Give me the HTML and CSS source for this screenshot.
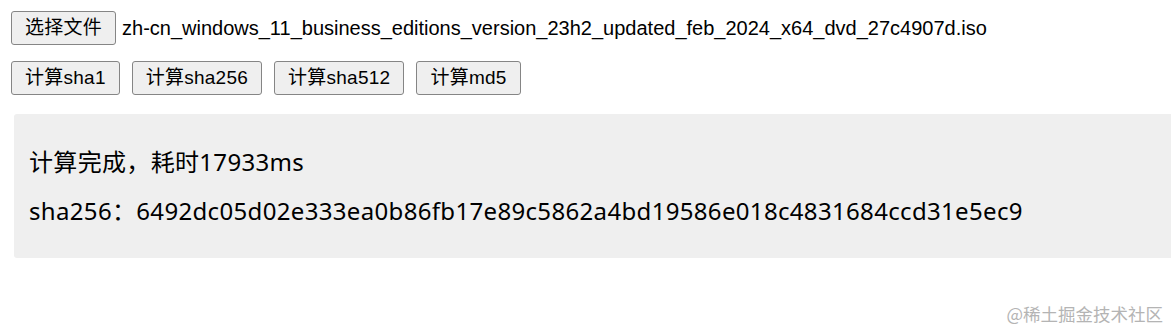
FILE: index.html
```html
<!DOCTYPE html>
<html lang="zh-CN">
<head>
    <meta charset="UTF-8">
    <title>文件哈希计算</title>
    <link rel="stylesheet" href="styles.css">
</head>
<body>
    <div class="file-row">
        <button class="btn">选择文件</button>
        <span class="file-name">zh-cn_windows_11_business_editions_version_23h2_updated_feb_2024_x64_dvd_27c4907d.iso</span>
    </div>

    <div class="actions">
        <button class="btn">计算sha1</button>
        <button class="btn">计算sha256</button>
        <button class="btn">计算sha512</button>
        <button class="btn">计算md5</button>
    </div>

    <div class="result">
        <p>计算完成，耗时17933ms</p>
        <p>sha256：6492dc05d02e333ea0b86fb17e89c5862a4bd19586e018c4831684ccd31e5ec9</p>
    </div>

    <div class="watermark">@稀土掘金技术社区</div>
</body>
</html>
```

FILE: styles.css
```css
body {
    margin: 0;
    padding: 11px 0 0 11px;
    font-family: "Liberation Sans", Arial, "Noto Sans CJK SC", sans-serif;
    color: #000;
    background: #fff;
    overflow: hidden;
}

.btn {
    font-family: "Liberation Sans", Arial, "Noto Sans CJK SC", sans-serif;
    font-size: 19px;
    line-height: 20px;
    padding: 6px 13px;
    letter-spacing: 0.25px;
    color: #000;
    background: #efefef;
    border: 1px solid #858585;
    border-radius: 3px;
}

.file-row {
    display: flex;
    align-items: center;
    gap: 6px;
}

.file-name {
    font-size: 20px;
}

.actions {
    display: flex;
    gap: 12px;
    margin-top: 16px;
}

.result {
    margin: 19px 0 0 3px;
    padding: 23px 15px;
    background: #efefef;
    border-radius: 3px 0 0 3px;
    font-family: "Noto Sans", "Noto Sans CJK SC", sans-serif;
    font-size: 24px;
    letter-spacing: 0.33px;
}

.result p {
    margin: 0;
    line-height: 49px;
}

.watermark {
    position: absolute;
    right: 8px;
    bottom: 5px;
    font-family: "Noto Sans CJK SC", sans-serif;
    font-size: 17.5px;
    color: #b4b4b4;
}
```
